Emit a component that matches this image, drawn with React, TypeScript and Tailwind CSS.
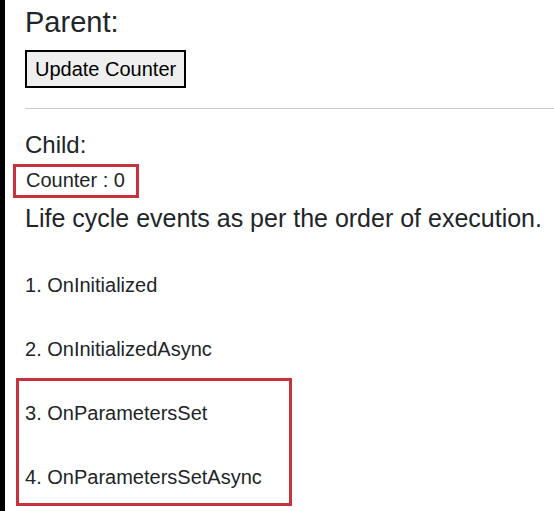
const events = ["OnInitialized", "OnInitializedAsync"];
const highlighted = ["OnParametersSet", "OnParametersSetAsync"];

export default function App() {
  return (
    <div className="flex h-[511px] w-full overflow-hidden bg-white font-['Liberation_Sans',Arial,sans-serif] text-[#212529]">
      <div className="w-[5px] shrink-0 bg-black" />
      <div className="flex min-w-0 flex-1 flex-col items-start pl-[20px]">
        <h3 className="mt-[4px] text-[29px] leading-[36px]">Parent:</h3>
        <button className="mt-[10px] border-2 border-black bg-[#efefef] px-[8px] text-[20px] leading-[34px] text-black">
          Update Counter
        </button>
        <hr className="mt-[20px] w-full border-0 border-t border-[#cccccc]" />

        <h5 className="mt-[21px] text-[24px] leading-[30px]">Child:</h5>
        <div className="ml-[-12px] mt-[4px] border-[3px] border-[#c8323c] pb-[2px] pl-[10px] pr-[11px] text-[20px] leading-[26px]">
          Counter : 0
        </div>
        <p className="mt-[4px] text-[25px] leading-[32px]">
          Life cycle events as per the order of execution.
        </p>

        <div className="mt-[36px] flex flex-col gap-[34px]">
          {events.map((e, i) => (
            <p key={e} className="text-[20px] leading-[30px]">
              {i + 1}. {e}
            </p>
          ))}
        </div>

        <div className="ml-[-9px] mt-[14px] flex w-[276px] flex-col gap-[34px] border-[3px] border-[#c8323c] pb-[11px] pl-[6px] pt-[17px]">
          {highlighted.map((e, i) => (
            <p key={e} className="text-[20px] leading-[30px]">
              {i + 3}. {e}
            </p>
          ))}
        </div>
      </div>
    </div>
  );
}
